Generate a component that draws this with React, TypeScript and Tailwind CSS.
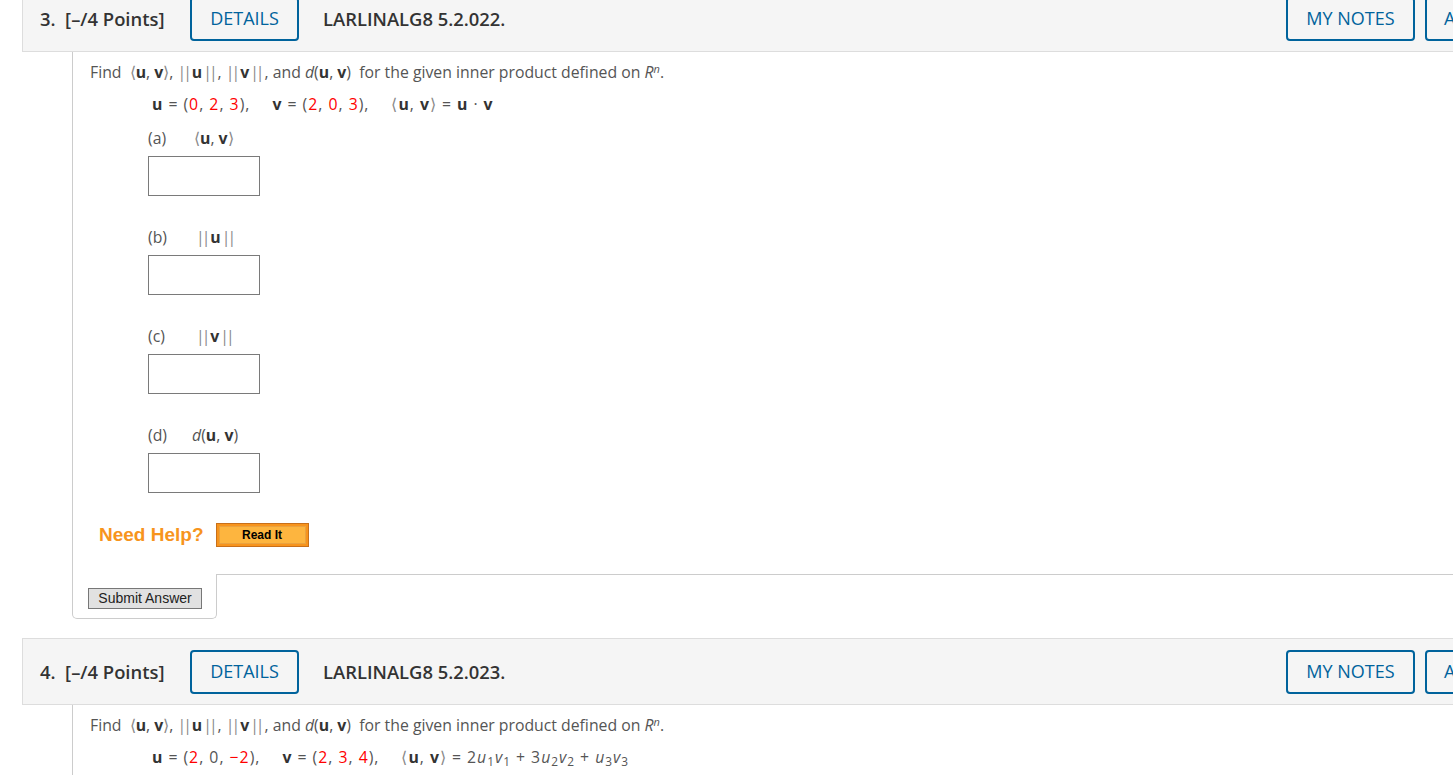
import React from "react";

const B = ({ children }: { children: React.ReactNode }) => (
  <b className="font-bold text-[#333]">{children}</b>
);
const R = ({ children }: { children: React.ReactNode }) => (
  <span className="text-[#ff0000]">{children}</span>
);
const G = ({ children }: { children: React.ReactNode }) => (
  <span className="text-[#888]">{children}</span>
);
const UV = () => (
  <span>
    <G>⟨</G>
    <B>u</B>, <B>v</B>
    <G>⟩</G>
  </span>
);
const Bars = () => <span className="text-[#888] tracking-[-3px] mr-[3px]">||</span>;
const Norm = ({ v }: { v: string }) => (
  <span>
    <Bars />
    <B>{v}</B>
    <span className="ml-[1px]"><Bars /></span>
  </span>
);
const Op = ({ c }: { c: string }) => <span className="mx-[5px]">{c}</span>;

function Header({ num, code, top }: { num: string; code: string; top: string }) {
  return (
    <div
      className={`ml-[22px] w-[1600px] h-[67px] bg-[#f5f5f5] border-l border-b border-t border-[#dddddd] flex items-center ${top}`}
      style={{ fontFamily: "'Open Sans', sans-serif" }}
    >
      <div className="w-[1263px] shrink-0 flex items-center pl-[17px]">
        <span className="text-[18.4px] font-semibold text-[#333] w-[150px] whitespace-pre">
          {num}.  [–/4 Points]
        </span>
        <span className="h-[44px] w-[109px] border-2 border-[#00639c] rounded-[4px] flex items-center justify-center text-[18px] text-[#00639c]">
          DETAILS
        </span>
        <span className="ml-[24px] text-[18.4px] font-semibold text-[#333]">{code}</span>
      </div>
      <span className="h-[44px] w-[129px] shrink-0 border-2 border-[#00639c] rounded-[4px] flex items-center justify-center text-[18px] text-[#00639c]">
        MY NOTES
      </span>
      <span className="ml-[10px] h-[44px] w-[220px] shrink-0 border-2 border-[#00639c] rounded-[4px] flex items-center pl-[17px] text-[18px] text-[#00639c]">
        ASK YOUR TEACHER
      </span>
    </div>
  );
}

function Part({ label, children }: { label: string; children: React.ReactNode }) {
  return (
    <div className="ml-[58px]">
      <div className="h-[24px] flex items-center">
        <span className="w-[42px] text-[#555]">({label})</span>
        <span>{children}</span>
      </div>
      <div className="mt-[5px] w-[112px] h-[40px] border border-[#7a7a7a] bg-white"></div>
    </div>
  );
}

const FindLine = () => (
  <div className="pt-[9px] h-[33px] flex items-center">
    <span>
      Find&nbsp; <UV />, <Norm v="u" />, <Norm v="v" />, and <i>d</i>(<B>u</B>, <B>v</B>)&nbsp; for the given inner product defined on <i>R</i>
      <sup className="italic text-[11px]">n</sup>.
    </span>
  </div>
);

export default function App() {
  const body = { fontFamily: "'Open Sans', sans-serif" };
  return (
    <div className="w-[1453px] h-[775px] overflow-hidden bg-white">
      <Header num="3" code="LARLINALG8 5.2.022." top="-mt-[15px]" />
      <div className="ml-[72px] border-l border-[#cccccc] pl-[17px] text-[15.8px] text-[#555]" style={body}>
        <FindLine />
        <div className="mt-[8px] h-[24px] flex items-center ml-[62px] whitespace-nowrap tracking-[1px]">
          <span>
            <B>u</B>
            <Op c="=" />(<R>0</R>, <R>2</R>, <R>3</R>),
          </span>
          <span className="ml-[22px]">
            <B>v</B>
            <Op c="=" />(<R>2</R>, <R>0</R>, <R>3</R>),
          </span>
          <span className="ml-[22px]">
            <UV />
            <Op c="=" />
            <B>u</B>
            <Op c="·" />
            <B>v</B>
          </span>
        </div>
        <div className="mt-[10px] flex flex-col gap-[30px]">
          <Part label="a">
            <span className="ml-[4px]"><UV /></span>
          </Part>
          <Part label="b">
            <span className="ml-[6px]"><Norm v="u" /></span>
          </Part>
          <Part label="c">
            <span className="ml-[6px]"><Norm v="v" /></span>
          </Part>
          <Part label="d">
            <span className="ml-[2px]">
              <i>d</i>(<B>u</B>, <B>v</B>)
            </span>
          </Part>
        </div>
        <div className="mt-[30px] h-[24px] flex items-center ml-[9px]" style={{ fontFamily: "'Liberation Sans', Arial, sans-serif" }}>
          <span className="text-[19px] font-bold text-[#f7941d]">Need Help?</span>
          <span className="ml-[12px] w-[93px] h-[24px] bg-[#f7941d] border border-[#c8701a] p-[2px]">
            <span className="w-full h-full flex items-center justify-center bg-[#fdb53f] border border-[#e9a240] text-[12px] font-bold text-black">
              Read It
            </span>
          </span>
        </div>
        <div className="h-[27px]"></div>
      </div>
      <div className="flex ml-[72px]">
        <div className="w-[145px] h-[45px] border-l border-r border-b border-[#cccccc] rounded-b-[5px] pl-[15px] pt-[14px]">
          <span
            className="flex items-center justify-center w-[114px] h-[21px] bg-[#e1e1e1] border border-[#777] text-[14px] text-[#222]"
            style={{ fontFamily: "'Liberation Sans', Arial, sans-serif" }}
          >
            Submit Answer
          </span>
        </div>
        <div className="flex-1 border-t border-[#cccccc]"></div>
      </div>
      <Header num="4" code="LARLINALG8 5.2.023." top="mt-[19px]" />
      <div className="ml-[72px] border-l border-[#cccccc] pl-[17px] text-[15.8px] text-[#555] h-[80px]" style={body}>
        <FindLine />
        <div className="mt-[8px] h-[24px] flex items-center ml-[62px] whitespace-nowrap tracking-[1px]">
          <span>
            <B>u</B>
            <Op c="=" />(<R>2</R>, 0, <R>−2</R>),
          </span>
          <span className="ml-[22px]">
            <B>v</B>
            <Op c="=" />(<R>2</R>, <R>3</R>, <R>4</R>),
          </span>
          <span className="ml-[22px]">
            <UV />
            <Op c="=" />
            2<i>u</i>
            <sub>1</sub>
            <i>v</i>
            <sub>1</sub>
            <Op c="+" />
            3<i>u</i>
            <sub>2</sub>
            <i>v</i>
            <sub>2</sub>
            <Op c="+" />
            <i>u</i>
            <sub>3</sub>
            <i>v</i>
            <sub>3</sub>
          </span>
        </div>
      </div>
    </div>
  );
}
